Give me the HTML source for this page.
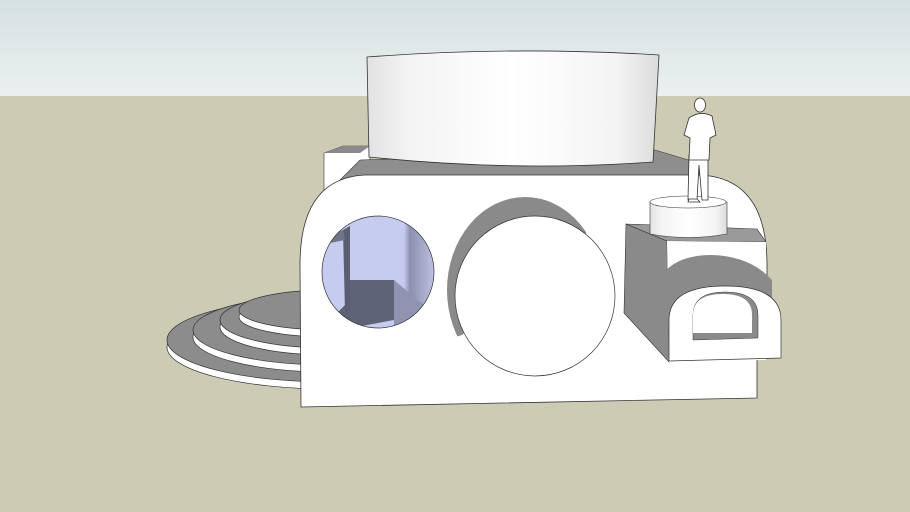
<!DOCTYPE html>
<html><head><meta charset="utf-8"><style>html,body{margin:0;padding:0;overflow:hidden}svg{display:block}</style></head>
<body>
<svg width="910" height="512" viewBox="0 0 910 512" xmlns="http://www.w3.org/2000/svg">
<defs>
<linearGradient id="sky" x1="0" y1="0" x2="0" y2="1"><stop offset="0" stop-color="#d5e1e2"/><stop offset="1" stop-color="#ebf0f0"/></linearGradient>
<linearGradient id="cyl" x1="0" y1="0" x2="1" y2="0"><stop offset="0" stop-color="#e2e2e2"/><stop offset="0.15" stop-color="#f4f4f4"/><stop offset="0.5" stop-color="#ffffff"/><stop offset="0.85" stop-color="#f4f4f4"/><stop offset="1" stop-color="#dcdcdc"/></linearGradient>
<linearGradient id="win" x1="0" y1="0" x2="1" y2="0"><stop offset="0" stop-color="#c6cbf0"/><stop offset="0.7" stop-color="#c6cbf0"/><stop offset="0.75" stop-color="#8c90ae"/><stop offset="1" stop-color="#c8ccee"/></linearGradient>
<clipPath id="lw"><circle cx="378" cy="272" r="56"/></clipPath>
<clipPath id="tun"><polygon points="430,345 462,335 592,228 600,180 430,180"/></clipPath>
</defs>
<rect width="910" height="96" fill="url(#sky)"/>
<rect y="96" width="910" height="416" fill="#cecbb5"/>

<g stroke="#333" stroke-width="0.7">
<ellipse cx="330" cy="347" rx="163" ry="42" fill="#fff"/>
<ellipse cx="330" cy="340" rx="163" ry="42" fill="#8c8c8c"/>
<ellipse cx="330" cy="337" rx="137" ry="35" fill="#fff"/>
<ellipse cx="330" cy="330" rx="137" ry="35" fill="#8c8c8c"/>
<ellipse cx="330" cy="327" rx="110" ry="28" fill="#fff"/>
<ellipse cx="330" cy="320" rx="110" ry="28" fill="#8c8c8c"/>
<ellipse cx="330" cy="317" rx="91" ry="20" fill="#fff"/>
<ellipse cx="330" cy="310" rx="91" ry="20" fill="#8c8c8c"/>
</g>

<polygon points="324,153 343,146 370,146 370,200 324,200" fill="#fff" stroke="#333" stroke-width="0.6"/>
<polygon points="324,153 343,146 370,146 360,153" fill="#8a8a8a"/>
<polygon points="330,190 360,160 655,150 705,165 705,178 355,178" fill="#8e8e8e" stroke="#333" stroke-width="0.6"/>

<path d="M301,407 L300,265 Q300,178 365,175 L700,175 Q767,178 767,265 L767,280 L757,280 L757,398 Z" fill="#fff" stroke="#333" stroke-width="0.8"/>

<path d="M367,57 Q513,46 659,55 L653,162 Q513,172 369,157 Z" fill="url(#cyl)" stroke="#333" stroke-width="0.8"/>

<g clip-path="url(#lw)">
<rect x="320" y="215" width="120" height="115" fill="url(#win)"/>
<polygon points="350,280 394,280 394,320 340,330 320,330 350,300" fill="#5f6378"/>
<polygon points="394,280 430,310 430,330 394,330" fill="#9094b0"/>
<polygon points="343,230 350,226 350,310 345,312" fill="#5a5e70"/>
<polygon points="320,240 343,230 345,240 320,245" fill="#707489"/>
</g>
<circle cx="378" cy="272" r="56" fill="none" stroke="#333" stroke-width="0.7"/>

<ellipse cx="525" cy="290" rx="78" ry="93" fill="#8a8a8a" clip-path="url(#tun)"/>
<circle cx="535" cy="296" r="80" fill="#fff" stroke="#333" stroke-width="0.7"/>

<polygon points="626,224 667,241 669,362 624,313" fill="#8a8a8a" stroke="#333" stroke-width="0.6"/>
<polygon points="626,224 757,229 766,242 667,241" fill="#9a9a9a" stroke="#333" stroke-width="0.6"/>
<polygon points="667,241 766,242 766,360 669,362" fill="#fff"/>
<path d="M655,300 L655,290 Q665,255 712,255 Q750,256 772,280 L772,330 L655,330 Z" fill="#8a8a8a"/>
<polygon points="655,300 669,340 669,362 655,340" fill="#8a8a8a"/>
<path d="M669,361 L669,320 Q669,286 725,286 Q781,286 781,320 L781,358 Z" fill="#fff" stroke="#333" stroke-width="0.7"/>
<path d="M693,340 L693,315 Q693,292 725,292 Q758,292 758,315 L758,338 Z" fill="#8a8a8a" stroke="#333" stroke-width="0.5"/>
<path d="M693,333 L693,315 Q693,294 723,294 Q752,294 752,315 L752,333 Z" fill="#fff"/>

<path d="M650,202 L650,234 Q688,241 727,234 L727,202 Z" fill="url(#cyl)" stroke="#333" stroke-width="0.6"/>
<ellipse cx="688" cy="202" rx="38" ry="6" fill="#fff" stroke="#333" stroke-width="0.6"/>

<g fill="#fff" stroke="#333" stroke-width="0.8">
<path d="M689,155 L688,200 L697,200 L699,165 L702,200 L708,200 L708,160 Z"/>
<path d="M689,118 Q700,110 712,116 L716,135 L710,138 L709,160 L689,160 L690,138 L684,135 Z"/>
<ellipse cx="700" cy="105" rx="5.5" ry="7"/>
<path d="M688,202 L700,202 L697,199 L689,199 Z"/>
</g>
</svg>
</body></html>
